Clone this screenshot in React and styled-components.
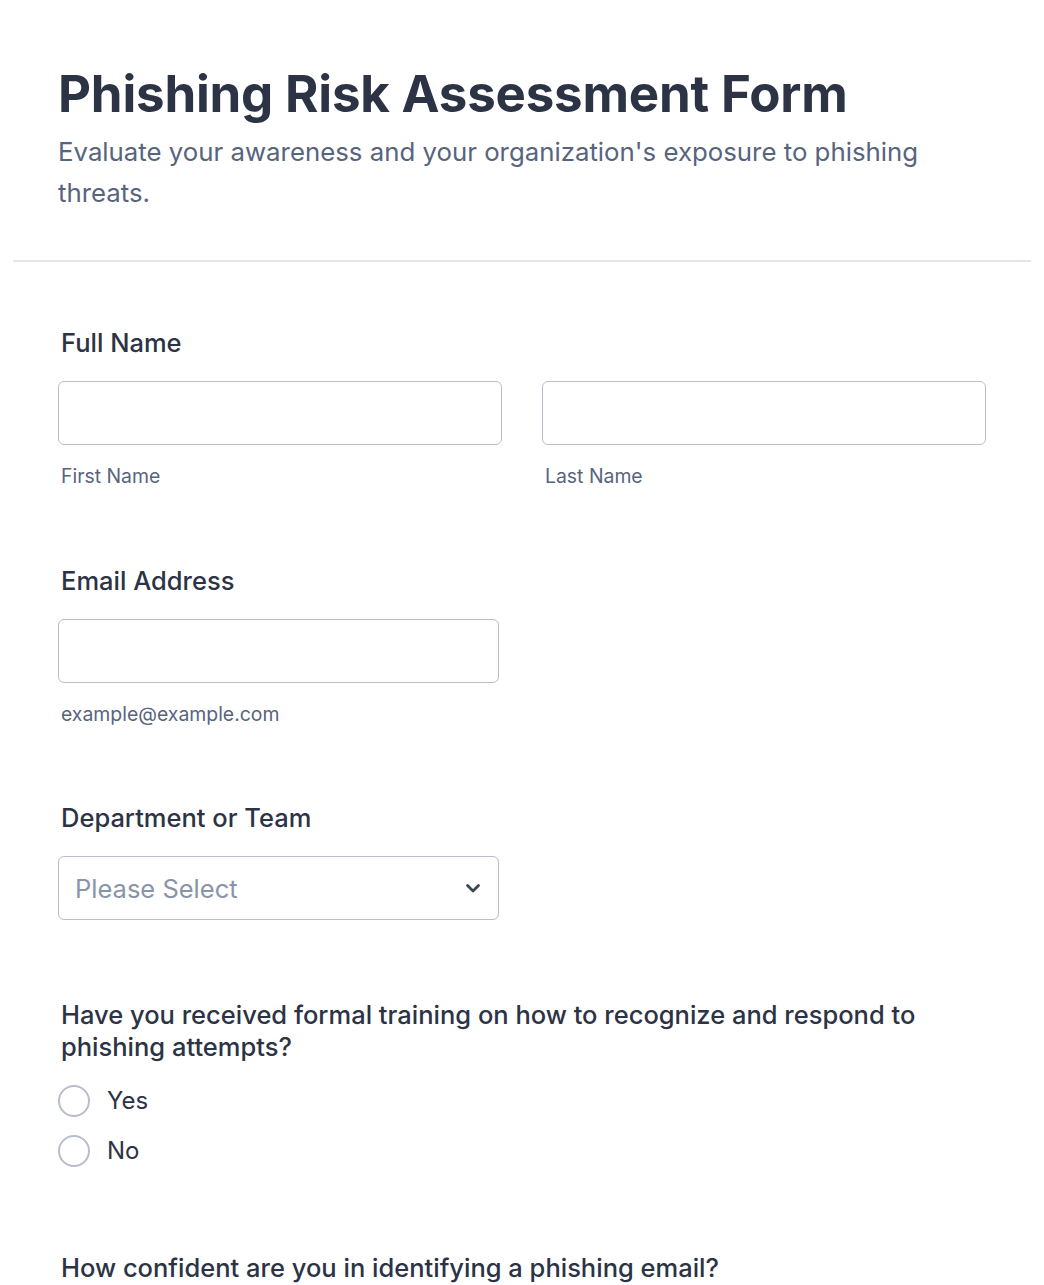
import React from 'react';
import styled, { createGlobalStyle } from 'styled-components';

const GlobalStyle = createGlobalStyle`
  html, body {
    margin: 0;
    padding: 0;
    background: #fff;
  }
  body {
    font-family: Inter, "Noto Sans", sans-serif;
    color: #2c3345;
  }
  * {
    box-sizing: border-box;
  }
`;

function App() {
  return (
    <>
      <GlobalStyle />
      <Page>
        <Header>
          <Title>Phishing Risk Assessment Form</Title>
          <Subtitle>
            Evaluate your awareness and your organization's exposure to phishing
            threats.
          </Subtitle>
        </Header>
        <Divider />
        <Form>
          <Field $after={75}>
            <Label>Full Name</Label>
            <NameRow>
              <div>
                <Input type="text" />
                <SubLabel>First Name</SubLabel>
              </div>
              <div>
                <Input type="text" />
                <SubLabel>Last Name</SubLabel>
              </div>
            </NameRow>
          </Field>

          <Field $after={74}>
            <Label>Email Address</Label>
            <HalfBox>
              <Input type="email" />
              <SubLabel>example@example.com</SubLabel>
            </HalfBox>
          </Field>

          <Field $after={79}>
            <Label>Department or Team</Label>
            <HalfBox>
              <Select>
                <span>Please Select</span>
                <svg width="18" height="18" viewBox="0 0 18 18" fill="none">
                  <path
                    d="M3.5 6.5L9 12L14.5 6.5"
                    stroke="#3a4559"
                    strokeWidth="2.8"
                    strokeLinecap="round"
                    strokeLinejoin="round"
                  />
                </svg>
              </Select>
            </HalfBox>
          </Field>

          <Field $after={85}>
            <Label>
              Have you received formal training on how to recognize and respond to
              phishing attempts?
            </Label>
            <RadioList>
              <RadioRow>
                <Radio />
                <RadioText>Yes</RadioText>
              </RadioRow>
              <RadioRow>
                <Radio />
                <RadioText>No</RadioText>
              </RadioRow>
            </RadioList>
          </Field>

          <Field $after={40}>
            <Label>How confident are you in identifying a phishing email?</Label>
          </Field>
        </Form>
      </Page>
    </>
  );
}

export default App;

const Page = styled.div`
  width: 1044px;
  padding: 0 13px;
`;

const Header = styled.div`
  padding: 64px 45px 47px;
`;

const Title = styled.h1`
  margin: 0;
  font-size: 51px;
  font-weight: 700;
  line-height: 60px;
  color: #2c3345;
  letter-spacing: -0.2px;
`;

const Subtitle = styled.p`
  margin: 7px 0 0;
  font-size: 25.8px;
  line-height: 41px;
  color: #57647e;
`;

const Divider = styled.hr`
  margin: 0;
  border: none;
  height: 2px;
  background: #e3e5ec;
`;

const Form = styled.div`
  padding: 65px 45px 0;
  display: flex;
  flex-direction: column;
`;

const Field = styled.div`
  display: flex;
  flex-direction: column;
  margin-bottom: ${(p) => p.$after}px;
`;

const Label = styled.label`
  display: block;
  padding-left: 3px;
  margin-bottom: 22px;
  font-size: 25.5px;
  line-height: 32px;
  font-weight: 500;
  color: #2c3345;
`;

const NameRow = styled.div`
  display: grid;
  grid-template-columns: 1fr 1fr;
  column-gap: 40px;
`;

const HalfBox = styled.div`
  width: 441px;
`;

const Input = styled.input`
  display: block;
  width: 100%;
  height: 64px;
  border: 1.5px solid #b8bdc9;
  border-radius: 6px;
  background: #fff;
  font-family: inherit;
  font-size: 24px;
  padding: 0 16px;
  outline: none;
`;

const SubLabel = styled.div`
  padding-left: 3px;
  margin-top: 17px;
  font-size: 19.4px;
  line-height: 28px;
  color: #57647e;
`;

const Select = styled.div`
  display: flex;
  align-items: center;
  justify-content: space-between;
  height: 64px;
  padding: 0 16px 0 16px;
  border: 1.5px solid #b8bdc9;
  border-radius: 6px;
  font-size: 25.5px;
  color: #8894ab;
`;

const RadioList = styled.div`
  display: flex;
  flex-direction: column;
  gap: 18px;
`;

const RadioRow = styled.div`
  display: flex;
  align-items: center;
  gap: 17px;
`;

const Radio = styled.span`
  width: 32px;
  height: 32px;
  border-radius: 50%;
  border: 2px solid #b8bdc9;
  background: #fff;
  flex-shrink: 0;
`;

const RadioText = styled.span`
  font-size: 24px;
  line-height: 32px;
  color: #2c3345;
`;
